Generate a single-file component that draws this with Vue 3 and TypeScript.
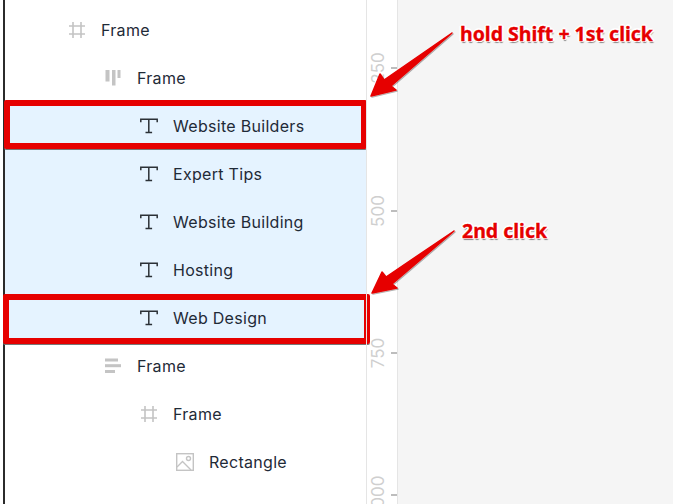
<script setup lang="ts">
type IconName = 'frame' | 'bars' | 'align' | 'text' | 'image'

interface Layer {
  name: string
  icon: IconName
  level: number
  selected?: boolean
  box?: 'first' | 'second'
}

const layers: Layer[] = [
  { name: 'Frame', icon: 'frame', level: 0 },
  { name: 'Frame', icon: 'bars', level: 1 },
  { name: 'Website Builders', icon: 'text', level: 2, selected: true, box: 'first' },
  { name: 'Expert Tips', icon: 'text', level: 2, selected: true },
  { name: 'Website Building', icon: 'text', level: 2, selected: true },
  { name: 'Hosting', icon: 'text', level: 2, selected: true },
  { name: 'Web Design', icon: 'text', level: 2, selected: true, box: 'second' },
  { name: 'Frame', icon: 'align', level: 1 },
  { name: 'Frame', icon: 'frame', level: 2 },
  { name: 'Rectangle', icon: 'image', level: 3 }
]

const rulerMarks = [
  { label: '250', top: 68 },
  { label: '500', top: 211 },
  { label: '750', top: 353 },
  { label: '1000', top: 495 }
]
</script>

<template>
  <div class="page">
    <div class="panel">
      <div
        v-for="(layer, i) in layers"
        :key="i"
        class="row"
        :class="{ selected: layer.selected }"
        :style="{ paddingLeft: 60 + layer.level * 36 + 'px' }"
      >
        <span class="icon">
          <svg v-if="layer.icon === 'frame'" width="18" height="18" viewBox="0 0 18 18" fill="none" stroke="#c4c4c4" stroke-width="1.6">
            <path d="M5 1v16M13 1v16M1 5h16M1 13h16" />
          </svg>
          <svg v-else-if="layer.icon === 'bars'" width="18" height="18" viewBox="0 0 18 18" fill="#c4c4c4">
            <rect x="1.500" y="1" width="4" height="11.500" />
            <rect x="8" y="1" width="3.500" height="15.500" />
            <rect x="13.500" y="1" width="3" height="8" />
          </svg>
          <svg v-else-if="layer.icon === 'align'" width="18" height="18" viewBox="0 0 18 18" fill="#c4c4c4">
            <rect x="1" y="1.500" width="13" height="3" />
            <rect x="1" y="7.200" width="16" height="3" />
            <rect x="1" y="13" width="10" height="3" />
          </svg>
          <svg v-else-if="layer.icon === 'text'" width="18" height="18" viewBox="0 0 18 18" fill="none" stroke="#2b3036" stroke-width="1.5">
            <path d="M0.800 5.200V2.200h16.400v3M8.800 2.200v13.400M5.500 15.600h6.600" />
          </svg>
          <svg v-else width="18" height="18" viewBox="0 0 18 18" fill="none" stroke="#c4c4c4" stroke-width="1.4">
            <rect x="0.700" y="0.700" width="16.600" height="16.600" />
            <path d="M1 14l5.500-5.500 8.500 8.500" />
            <circle cx="12.500" cy="5.500" r="2" />
          </svg>
        </span>
        <span class="name">{{ layer.name }}</span>
        <div v-if="layer.box" class="red-box" :class="layer.box" />
      </div>
    </div>

    <div class="ruler">
      <div v-for="mark in rulerMarks" :key="mark.label" class="mark" :style="{ top: mark.top + 'px' }">
        <span class="mark-label">{{ mark.label }}</span>
        <span class="tick" />
      </div>
    </div>

    <div class="canvas" />

    <svg class="arrows" width="673" height="504" viewBox="0 0 673 504">
      <defs>
        <filter id="arrow-shadow" x="-20%" y="-20%" width="140%" height="140%">
          <feDropShadow dx="1" dy="1" stdDeviation="0.7" flood-color="#000" flood-opacity="0.3" />
        </filter>
      </defs>
      <path
        d="M452 33 L391 86 L396 90 L371 96 L380 74 L384 80 Z"
        fill="#e60000"
        stroke="#e60000"
        stroke-width="1.500"
        stroke-linejoin="round"
        filter="url(#arrow-shadow)"
      />
      <path
        d="M454 231 L392 284 L397 288 L372 293 L382 272 L386 277 Z"
        fill="#e60000"
        stroke="#e60000"
        stroke-width="1.500"
        stroke-linejoin="round"
        filter="url(#arrow-shadow)"
      />
    </svg>

    <div class="note note-first">hold Shift + 1st click</div>
    <div class="note note-second">2nd click</div>
  </div>
</template>

<style scoped>
.page {
  position: relative;
  display: flex;
  width: 673px;
  height: 504px;
  overflow: hidden;
  background: #fff;
  font-family: Inter, "Liberation Sans", sans-serif;
}

.panel {
  flex: none;
  box-sizing: border-box;
  width: 363px;
  margin-left: 3px;
  padding-top: 6px;
  border-left: 2px solid #2b2b2b;
}

.row {
  position: relative;
  display: flex;
  align-items: center;
  height: 48px;
  font-size: 16px;
  letter-spacing: 0.3px;
  color: #1f2a37;
}

.row.selected {
  background: #e5f3ff;
}

.icon {
  display: flex;
  align-items: center;
  flex: none;
  box-sizing: border-box;
  width: 36px;
  height: 18px;
  padding-left: 3px;
}

.name {
  white-space: nowrap;
}

.red-box {
  position: absolute;
  border: 6px solid #e60000;
  border-radius: 2px;
  box-shadow: 0 1px 0 #777;
}

.red-box.first {
  top: -2px;
  bottom: 1px;
  left: -1px;
  right: -1px;
}

.red-box.second {
  top: 0;
  bottom: -2px;
  left: -2px;
  right: -4px;
}

.ruler {
  position: relative;
  flex: none;
  box-sizing: border-box;
  width: 32px;
  border-left: 1px solid #e5e5e5;
  border-right: 1px solid #e5e5e5;
}

.mark {
  position: absolute;
  left: 0;
  right: 0;
  height: 0;
}

.mark-label {
  position: absolute;
  left: 11px;
  top: 0;
  transform: translate(-50%, -50%) rotate(-90deg);
  font-size: 17px;
  line-height: 17px;
  color: #cfcfcf;
  white-space: nowrap;
}

.tick {
  position: absolute;
  right: 0;
  top: -1px;
  width: 6px;
  height: 1.500px;
  background: #bdbdbd;
}

.canvas {
  flex: 1;
  background: #f5f5f5;
}

.arrows {
  position: absolute;
  top: 0;
  left: 0;
}

.note {
  position: absolute;
  font-family: "Noto Sans", "Open Sans", sans-serif;
  font-size: 19.500px;
  font-weight: 700;
  line-height: 24px;
  color: #e60000;
  white-space: nowrap;
  -webkit-text-stroke: 0.3px #e60000;
  text-shadow:
    -1px 0 0 #fff, 1px 0 0 #fff, 0 -1px 0 #fff, 0 1px 0 #fff,
    -1px -1px 0 #fff, 1px -1px 0 #fff, -1px 1px 0 #fff, 1px 1px 0 #fff,
    0 -2px 0 #fff, -2px 0 0 #fff, 2px 0 0 #fff,
    1px 2px 1px rgba(0, 0, 0, 0.45);
}

.note-first {
  top: 22px;
  left: 460px;
}

.note-second {
  top: 219px;
  left: 462px;
}
</style>
